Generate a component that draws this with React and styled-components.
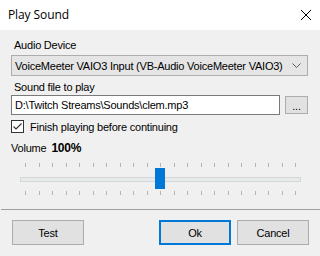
import styled, { createGlobalStyle } from "styled-components";

const Global = createGlobalStyle`
  html, body {
    margin: 0;
    padding: 0;
    background: #f0f0f0;
  }
  body {
    font-family: "Liberation Sans", Arial, sans-serif;
    font-size: 11px;
    letter-spacing: -0.22px;
    color: #000;
  }
`;

const Dialog = styled.div`
  width: 320px;
  height: 256px;
  display: flex;
  flex-direction: column;
  background: #f0f0f0;
  overflow: hidden;
`;

const TitleBar = styled.div`
  height: 30px;
  flex: none;
  background: #fff;
  display: flex;
  align-items: center;
  justify-content: space-between;
  padding: 0 8px 0 8px;
  box-sizing: border-box;
`;

const Title = styled.span`
  font-family: "Open Sans", "Noto Sans", sans-serif;
  font-size: 12px;
  letter-spacing: -0.1px;
  margin-top: -1px;
`;

const Body = styled.div`
  display: flex;
  flex-direction: column;
  padding: 9px 12px 0 11px;
`;

const Label = styled.div`
  height: 13px;
  line-height: 13px;
  padding-left: 3px;
  margin-bottom: ${(p) => p.$gap || 3}px;
`;

const Combo = styled.div`
  height: 21px;
  box-sizing: border-box;
  border: 1px solid #adadad;
  background: #e5e5e5;
  display: flex;
  align-items: center;
  justify-content: space-between;
  padding: 0 6px 0 3px;
  margin-bottom: 5px;
  white-space: nowrap;
`;

const FileRow = styled.div`
  display: flex;
  align-items: flex-start;
  gap: 5px;
  margin-bottom: 5px;
`;

const TextBox = styled.div`
  flex: 1;
  height: 20px;
  box-sizing: border-box;
  border: 1px solid #7a7a7a;
  background: #fff;
  display: flex;
  align-items: center;
  padding-left: 3px;
`;

const SmallButton = styled.div`
  width: 23px;
  height: 18px;
  box-sizing: border-box;
  border: 1px solid #adadad;
  background: #e1e1e1;
  display: flex;
  align-items: center;
  justify-content: center;
  padding-top: 2px;
  margin-top: 1px;
`;

const CheckRow = styled.label`
  display: flex;
  align-items: center;
  gap: 6px;
  height: 13px;
  margin-bottom: 8px;
`;

const Box = styled.span`
  width: 13px;
  height: 13px;
  box-sizing: border-box;
  border: 1px solid #333;
  background: #fff;
  display: flex;
  align-items: center;
  justify-content: center;
`;

const VolumeRow = styled.div`
  display: flex;
  align-items: center;
  height: 13px;
  gap: 5px;
`;

const Percent = styled.b`
  font-size: 12px;
  font-weight: bold;
`;

const Slider = styled.div`
  position: relative;
  margin: 9px 0 0 9px;
  width: 281px;
`;

const Ticks = styled.div`
  display: flex;
  justify-content: space-between;
  width: 271px;
  margin-left: 5px;
  height: 4px;
  margin-top: ${(p) => p.$top}px;
`;

const Tick = styled.span`
  width: 1px;
  height: 4px;
  background: #b4b4b4;
`;

const Track = styled.div`
  height: 5px;
  box-sizing: border-box;
  border: 1px solid #d6d6d6;
  background: #e7eaea;
  margin-top: 10px;
`;

const Thumb = styled.div`
  position: absolute;
  top: 5px;
  width: 10px;
  height: 21px;
  background: #0078d7;
`;

const Separator = styled.div`
  height: 1px;
  background: #a0a0a0;
  margin: 14px 0 10px 1px;
`;

const Footer = styled.div`
  display: flex;
  padding: 0 11px 0 12px;
  gap: 6px;
`;

const Button = styled.div`
  width: 72px;
  height: 25px;
  box-sizing: border-box;
  border: ${(p) => (p.$default ? "2px solid #0078d7" : "1px solid #adadad")};
  background: #e1e1e1;
  display: flex;
  align-items: center;
  justify-content: center;
  margin-right: ${(p) => p.$push || 0}px;
`;

const ticks = Array.from({ length: 21 });

export default function App() {
  const volume = 100;
  return (
    <Dialog>
      <Global />
      <TitleBar>
        <Title>Play Sound</Title>
        <svg width="12" height="12" viewBox="0 0 12 12">
          <path d="M1 1 L11 11 M11 1 L1 11" stroke="#000" strokeWidth="1" fill="none" />
        </svg>
      </TitleBar>
      <Body>
        <Label $gap={3}>Audio Device</Label>
        <Combo>
          <span>VoiceMeeter VAIO3 Input (VB-Audio VoiceMeeter VAIO3)</span>
          <svg width="9" height="5" viewBox="0 0 9 5">
            <path d="M0.5 0.5 L4.5 4.5 L8.5 0.5" stroke="#5a5a5a" fill="none" />
          </svg>
        </Combo>
        <Label $gap={1}>Sound file to play</Label>
        <FileRow>
          <TextBox>D:\Twitch Streams\Sounds\clem.mp3</TextBox>
          <SmallButton>...</SmallButton>
        </FileRow>
        <CheckRow>
          <Box>
            <svg width="11" height="11" viewBox="0 0 11 11">
              <path d="M1.5 5.5 L4 8 L9.5 2.5" stroke="#333" strokeWidth="1.2" fill="none" />
            </svg>
          </Box>
          Finish playing before continuing
        </CheckRow>
        <VolumeRow>
          <span>Volume</span>
          <Percent>{volume}%</Percent>
        </VolumeRow>
        <Slider>
          <Ticks $top={0}>
            {ticks.map((_, i) => (
              <Tick key={i} />
            ))}
          </Ticks>
          <Track />
          <Ticks $top={9}>
            {ticks.map((_, i) => (
              <Tick key={i} />
            ))}
          </Ticks>
          <Thumb style={{ left: 135 }} />
        </Slider>
      </Body>
      <Separator />
      <Footer>
        <Button $push={69}>Test</Button>
        <Button $default>Ok</Button>
        <Button>Cancel</Button>
      </Footer>
    </Dialog>
  );
}
